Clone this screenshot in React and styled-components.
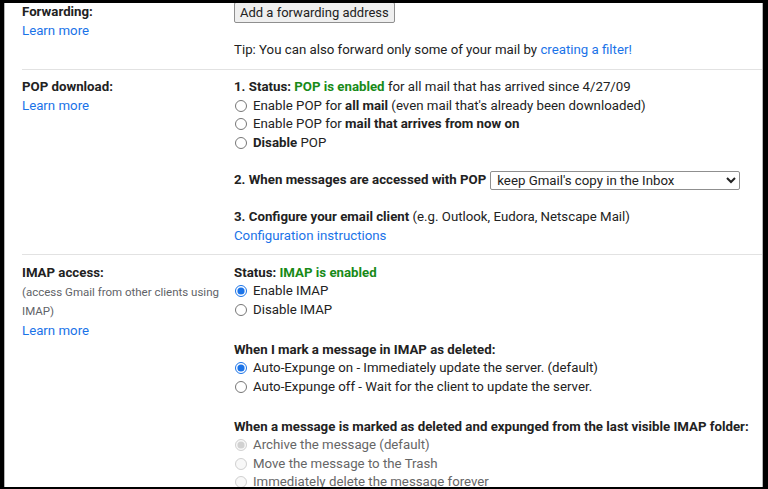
import styled, { createGlobalStyle } from "styled-components";

const GlobalStyle = createGlobalStyle`
  body {
    margin: 0;
    background: #fff;
    font-family: Roboto, "Liberation Sans", Arial, sans-serif;
  }
`;

const Frame = styled.div`
  width: 768px;
  height: 489px;
  box-sizing: border-box;
  border-style: solid;
  border-color: #000;
  border-width: 3px 5px 2px 4px;
  background: #fff;
`;

const Viewport = styled.div`
  height: 100%;
  overflow: hidden;
  border-left: 1px solid #b5b5b5;
  border-right: 1px solid #b5b5b5;
`;

const Page = styled.div`
  margin-top: -9px;
  padding-left: 17px;
  font-size: 13.25px;
  line-height: 18.5px;
  color: #222;
`;

const Section = styled.div`
  display: grid;
  grid-template-columns: 212px 1fr;
  padding: ${(p) => p.$pad || "9px 0 9.5px"};
  border-bottom: ${(p) => (p.$last ? "none" : "1px solid #e2e2e2")};
`;

const Label = styled.div`
  font-weight: 700;
`;

const Note = styled.div`
  padding: 1px 0;
  font-size: 11.5px;
  line-height: 19px;
  color: #5f6368;
`;

const Link = styled.a`
  color: #1a73e8;
  text-decoration: none;
  cursor: pointer;
`;

const Line = styled.div`
  margin-top: ${(p) => p.$gap || "0"};
  white-space: nowrap;
`;

const Enabled = styled.b`
  color: #188a18;
`;

const Button = styled.button`
  display: block;
  margin-top: -1.5px;
  height: 21px;
  padding: 0 5px;
  font-family: inherit;
  font-size: 13px;
  color: #222;
  background: #efefef;
  border: 1px solid #8f8f8f;
  border-radius: 2px;
`;

const Option = styled.label`
  display: flex;
  align-items: center;
  height: 18.5px;
  white-space: nowrap;
  color: ${(p) => (p.$disabled ? "#666" : "#222")};
`;

const Radio = styled.input.attrs({ type: "radio" })`
  width: 12px;
  height: 12px;
  margin: 0 6px 0 1px;
  accent-color: #1a73e8;
`;

const Select = styled.select`
  height: 19px;
  width: 250px;
  margin-left: 4px;
  vertical-align: middle;
  font-family: inherit;
  font-size: 13.25px;
  color: #222;
  background: #fff;
  border: 1px solid #8f8f8f;
  border-radius: 2px;
  padding: 0 2px;
`;

export default function App() {
  return (
    <>
      <GlobalStyle />
      <Frame>
        <Viewport>
          <Page>
            <Section>
              <div>
                <Label>Forwarding:</Label>
                <Link>Learn more</Link>
              </div>
              <div>
                <Button>Add a forwarding address</Button>
                <Line $gap="18.5px">
                  Tip: You can also forward only some of your mail by{" "}
                  <Link>creating a filter!</Link>
                </Line>
              </div>
            </Section>

            <Section $pad="8px 0 8.5px">
              <div>
                <Label>POP download:</Label>
                <Link>Learn more</Link>
              </div>
              <div>
                <Line>
                  <b>1. Status: </b>
                  <Enabled>POP is enabled</Enabled> for all mail that has arrived since 4/27/09
                </Line>
                <Option>
                  <Radio name="pop" />
                  <span>
                    Enable POP for <b>all mail</b> (even mail that's already been downloaded)
                  </span>
                </Option>
                <Option>
                  <Radio name="pop" />
                  <span>
                    Enable POP for <b>mail that arrives from now on</b>
                  </span>
                </Option>
                <Option>
                  <Radio name="pop" />
                  <span>
                    <b>Disable</b> POP
                  </span>
                </Option>
                <Line $gap="18.5px">
                  <b>2. When messages are accessed with POP</b>
                  <Select defaultValue="keep">
                    <option value="keep">keep Gmail's copy in the Inbox</option>
                    <option value="read">mark Gmail's copy as read</option>
                    <option value="archive">archive Gmail's copy</option>
                    <option value="delete">delete Gmail's copy</option>
                  </Select>
                </Line>
                <Line $gap="18.5px">
                  <b>3. Configure your email client</b> (e.g. Outlook, Eudora, Netscape Mail)
                </Line>
                <Link>Configuration instructions</Link>
              </div>
            </Section>

            <Section $pad="9px 0 0" $last>
              <div>
                <Label>IMAP access:</Label>
                <Note>
                  (access Gmail from other clients using
                  <br />
                  IMAP)
                </Note>
                <Link>Learn more</Link>
              </div>
              <div>
                <Line>
                  <b>Status: </b>
                  <Enabled>IMAP is enabled</Enabled>
                </Line>
                <Option>
                  <Radio name="imap" defaultChecked />
                  <span>Enable IMAP</span>
                </Option>
                <Option>
                  <Radio name="imap" />
                  <span>Disable IMAP</span>
                </Option>
                <Line $gap="21.5px">
                  <b>When I mark a message in IMAP as deleted:</b>
                </Line>
                <Option>
                  <Radio name="expunge" defaultChecked />
                  <span>Auto-Expunge on - Immediately update the server. (default)</span>
                </Option>
                <Option>
                  <Radio name="expunge" />
                  <span>Auto-Expunge off - Wait for the client to update the server.</span>
                </Option>
                <Line $gap="21.5px">
                  <b>When a message is marked as deleted and expunged from the last visible IMAP folder:</b>
                </Line>
                <Option $disabled>
                  <Radio name="expunged" defaultChecked disabled />
                  <span>Archive the message (default)</span>
                </Option>
                <Option $disabled>
                  <Radio name="expunged" disabled />
                  <span>Move the message to the Trash</span>
                </Option>
                <Option $disabled>
                  <Radio name="expunged" disabled />
                  <span>Immediately delete the message forever</span>
                </Option>
              </div>
            </Section>
          </Page>
        </Viewport>
      </Frame>
    </>
  );
}
